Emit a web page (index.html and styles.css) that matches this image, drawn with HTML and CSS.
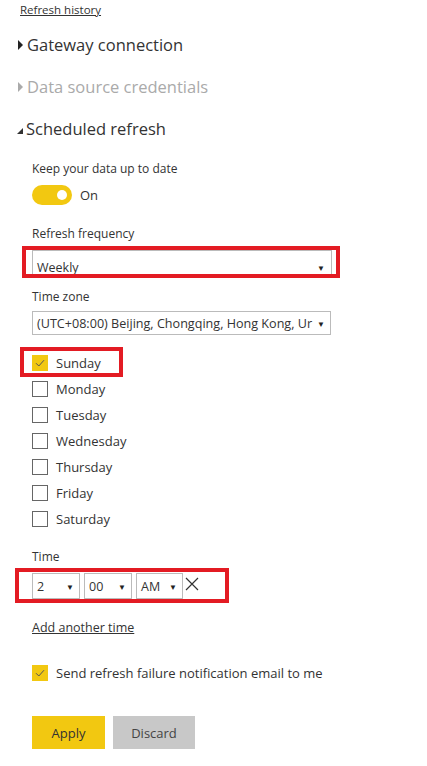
FILE: index.html
```html
<!DOCTYPE html>
<html>
<head>
<meta charset="utf-8">
<link rel="stylesheet" href="styles.css">
</head>
<body>
<div class="page">
  <a class="history">Refresh history</a>
  <div class="section first"><span class="tri right"></span>Gateway connection</div>
  <div class="section disabled"><span class="tri right"></span>Data source credentials</div>
  <div class="section"><span class="tri down"></span>Scheduled refresh</div>

  <div class="body">
    <div class="label keep">Keep your data up to date</div>
    <div class="toggle-row"><span class="toggle"><span class="knob"></span></span><span class="on">On</span></div>

    <div class="label freq">Refresh frequency</div>
    <div class="redbox freqbox">
      <div class="select wide"><span>Weekly</span><span class="arrow">▼</span></div>
    </div>

    <div class="label tz">Time zone</div>
    <div class="select wide tzsel"><span class="tztext">(UTC+08:00) Beijing, Chongqing, Hong Kong, Ur</span><span class="arrow">▼</span></div>

    <div class="redbox sunbox">
      <div class="check-row"><span class="cb checked"><svg viewBox="0 0 16 16" width="16" height="16"><path d="M4 8.2 L6.8 11 L12 5.2" fill="none" stroke="#555" stroke-width="1"/></svg></span>Sunday</div>
    </div>
    <div class="days">
      <div class="check-row"><span class="cb"></span>Monday</div>
      <div class="check-row"><span class="cb"></span>Tuesday</div>
      <div class="check-row"><span class="cb"></span>Wednesday</div>
      <div class="check-row"><span class="cb"></span>Thursday</div>
      <div class="check-row"><span class="cb"></span>Friday</div>
      <div class="check-row"><span class="cb"></span>Saturday</div>
    </div>

    <div class="label time">Time</div>
    <div class="redbox timebox">
      <div class="select small"><span>2</span><span class="arrow">▼</span></div>
      <div class="select small"><span>00</span><span class="arrow">▼</span></div>
      <div class="select small"><span>AM</span><span class="arrow">▼</span></div>
      <svg class="x" viewBox="0 0 14 14" width="14" height="14"><path d="M1 1 L13 13 M13 1 L1 13" stroke="#333" stroke-width="1.2"/></svg>
    </div>

    <a class="add">Add another time</a>

    <div class="check-row notify"><span class="cb checked"><svg viewBox="0 0 16 16" width="16" height="16"><path d="M4 8.2 L6.8 11 L12 5.2" fill="none" stroke="#555" stroke-width="1"/></svg></span>Send refresh failure notification email to me</div>

    <div class="buttons">
      <button class="btn apply">Apply</button>
      <button class="btn discard">Discard</button>
    </div>
  </div>
</div>
</body>
</html>
```

FILE: styles.css
```css
html, body { margin: 0; padding: 0; background: #fff; }
body { font-family: "Open Sans", "Noto Sans", sans-serif; color: #333; }
.page { padding: 2px 0 0 20px; width: 407px; }
.history { display: block; font-size: 11.5px; color: #333; text-decoration: underline; line-height: 16px; height: 16px; }
.section { font-size: 16.5px; line-height: 22px; margin-top: 20px; display: flex; align-items: center; color: #333; margin-left: -2px; }
.section.first { margin-top: 16px; }
.section.disabled { color: #aaa; }
.tri { display: inline-block; width: 0; height: 0; margin-right: 4px; }
.tri.right { border-top: 5px solid transparent; border-bottom: 5px solid transparent; border-left: 5px solid #222; }
.disabled .tri.right { border-left-color: #aaa; }
.tri.down { border-left: 6px solid transparent; border-bottom: 6px solid #333; margin-right: 3px; margin-top: 4px; margin-left: -1px; }
.body { padding-left: 12px; font-size: 12.5px; }
.label { font-size: 12px; line-height: 16px; color: #333; }
.keep { margin-top: 21px; }
.toggle-row { display: flex; align-items: center; margin-top: 8px; height: 20px; }
.toggle { width: 40px; height: 20px; border-radius: 10px; background: #f2c811; position: relative; display: inline-block; }
.knob { position: absolute; width: 10px; height: 10px; border-radius: 50%; background: #fff; right: 5px; top: 5px; }
.on { margin-left: 8px; font-size: 13px; }
.freq { margin-top: 21px; }
.redbox { border: 4px solid #e31b23; box-sizing: border-box; }
.freqbox { margin-left: -10px; width: 318px; height: 32px; padding: 0 0 0 6px; margin-top: 4px; overflow: hidden; }
.select { border: 1px solid #bbb; box-sizing: border-box; display: flex; align-items: center; justify-content: space-between; font-size: 12.5px; color: #333; background: #fff; }
.arrow { font-size: 8px; color: #222; flex: none; }
.freqbox .select { width: 300px; height: 30px; margin-top: 0; padding: 4px 6px 0 4px; }
.tz { margin-top: 11px; }
.tzsel { width: 299px; height: 24px; margin-top: 6px; padding: 0 5px 0 4px; }
.tztext { white-space: nowrap; font-size: 12.6px; }
.sunbox { margin-left: -12px; width: 103px; height: 30px; margin-top: 12px; padding: 1px 0 0 8px; }
.check-row { display: flex; align-items: center; height: 26px; font-size: 13px; color: #333; }
.sunbox .check-row { height: 22px; }
.cb { width: 16px; height: 16px; box-sizing: border-box; border: 1px solid #666; margin-right: 8px; display: inline-block; flex: none; }
.cb.checked { background: #f2c811; border: none; }
.cb svg { display: block; }
.days { margin-top: -1px; }
.time { margin-top: 17px; }
.timebox { margin-left: -17px; width: 214px; height: 35px; margin-top: 3px; display: flex; align-items: center; padding-left: 13px; gap: 4px; }
.select.small { width: 48px; height: 26px; padding: 2px 5px 0 4px; }
.timebox .select.small:nth-child(3) { width: 47px; }
.x { margin-left: -2px; margin-top: -3px; }
.add { display: block; margin-top: 16px; font-size: 12.5px; color: #333; text-decoration: underline; line-height: 18px; }
.notify { margin-top: 25px; height: 22px; }
.buttons { display: flex; gap: 8px; margin-top: 32px; }
.btn { border: none; height: 33px; font-family: inherit; font-size: 13px; color: #333; padding: 0; }
.apply { background: #f2c811; width: 73px; }
.discard { background: #c8c8c8; width: 82px; color: #444; }
```
